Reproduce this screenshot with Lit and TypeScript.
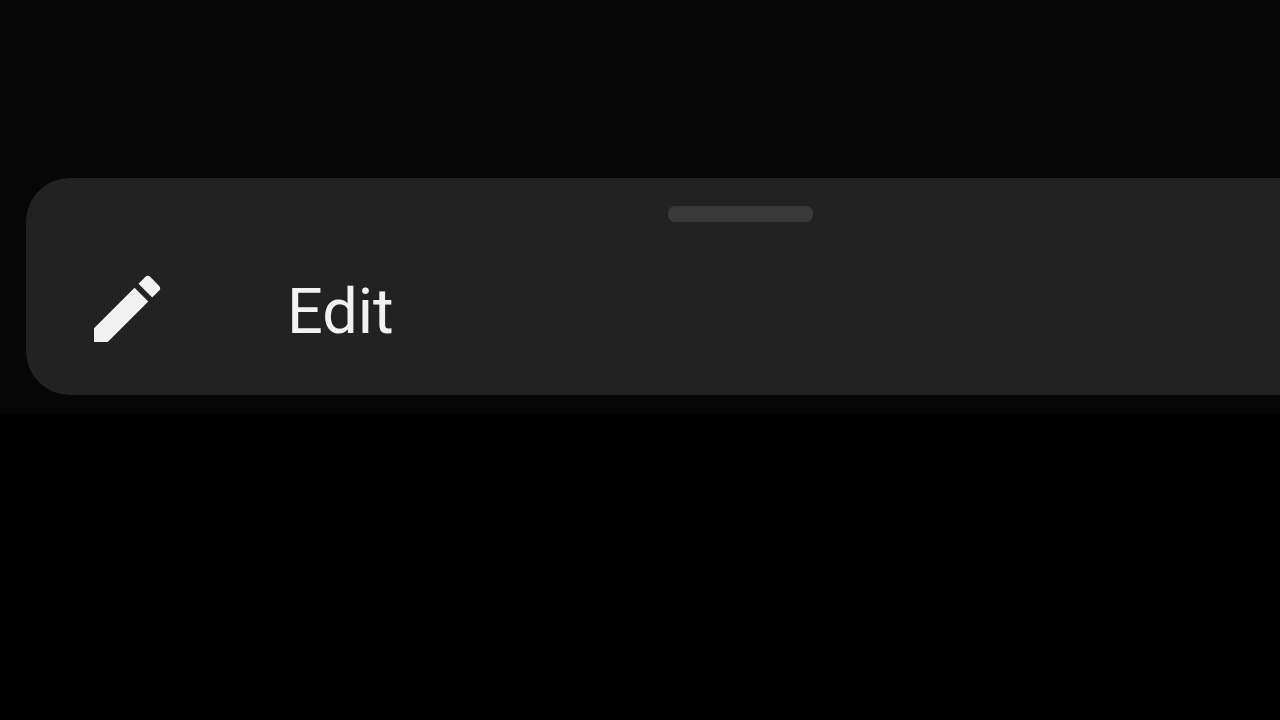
import { LitElement, html, css } from "lit";
import { customElement } from "lit/decorators.js";

@customElement("app-root")
export class AppRoot extends LitElement {
  static styles = css`
    :host {
      display: block;
      min-height: 100vh;
      background: #000;
      font-family: Roboto, sans-serif;
    }
    .scrim {
      background: #060606;
      padding: 178px 0 18px 26px;
    }
    .sheet {
      background: #222;
      border-radius: 44px 0 0 44px;
      padding: 28px 0 36px;
    }
    .grip {
      display: flex;
      justify-content: center;
      padding-left: 175px;
    }
    .handle {
      width: 145px;
      height: 16px;
      border-radius: 7px;
      background: #3a3a3a;
    }
    .action {
      display: flex;
      align-items: flex-start;
      gap: 116px;
      width: 100%;
      margin: 43px 0 0;
      padding: 0 0 0 57px;
      border: 0;
      background: none;
      color: #f2f2f2;
      font: 400 63px/94px Roboto, sans-serif;
      text-align: left;
      cursor: pointer;
    }
    .icon {
      display: block;
      flex: none;
      width: 88px;
      height: 88px;
      fill: currentColor;
    }
  `;

  render() {
    return html`
      <main class="scrim">
        <section class="sheet" aria-label="Actions">
          <div class="grip"><div class="handle"></div></div>
          <button class="action" type="button">
            <svg class="icon" viewBox="0 0 24 24" aria-hidden="true">
              <path
                d="M3 17.25V21h3.75L17.81 9.94l-3.75-3.75L3 17.25zM20.71 7.04a1 1 0 0 0 0-1.41l-2.34-2.34a1 1 0 0 0-1.41 0l-1.83 1.83 3.75 3.75 1.83-1.83z"
              />
            </svg>
            <span>Edit</span>
          </button>
        </section>
      </main>
    `;
  }
}
